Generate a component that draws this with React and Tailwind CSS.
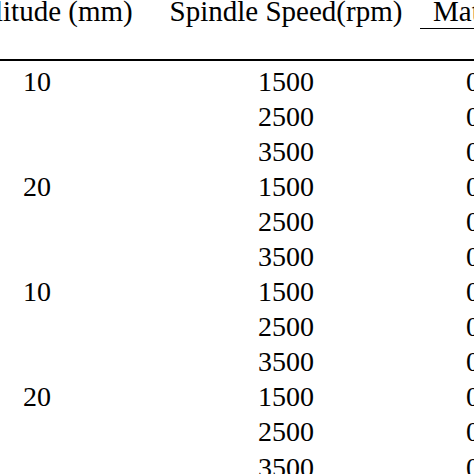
const rows = [
  { amp: "10", speed: "1500", rate: "0.152" },
  { amp: "", speed: "2500", rate: "0.184" },
  { amp: "", speed: "3500", rate: "0.207" },
  { amp: "20", speed: "1500", rate: "0.163" },
  { amp: "", speed: "2500", rate: "0.198" },
  { amp: "", speed: "3500", rate: "0.221" },
  { amp: "10", speed: "1500", rate: "0.147" },
  { amp: "", speed: "2500", rate: "0.176" },
  { amp: "", speed: "3500", rate: "0.195" },
  { amp: "20", speed: "1500", rate: "0.158" },
  { amp: "", speed: "2500", rate: "0.189" },
  { amp: "", speed: "3500", rate: "0.213" },
];

export default function App() {
  return (
    <div
      className="w-[474px] h-[474px] overflow-hidden bg-white text-black"
      style={{ fontFamily: '"Liberation Serif", "Times New Roman", serif' }}
    >
      <div className="-ml-[63px] w-[800px]">
        {/* header */}
        <div className="h-[62px]">
          <div className="flex -mt-[3px] text-[29px] leading-[28px] whitespace-nowrap">
            <div className="w-[200px] shrink-0 text-center pr-[7px]">Amplitude (mm)</div>
            <div className="w-[283px] shrink-0 text-center pl-[15px]">Spindle Speed(rpm)</div>
            <div className="flex-1 pl-[13px] pb-[3px] border-b-[1.5px] border-black">
              Material Removal Rate
            </div>
          </div>
        </div>
        <div className="h-[1.5px] bg-black" />

        {/* body */}
        <div className="pt-[3px] text-[28px] leading-[35.1px]">
          {rows.map((row, i) => (
            <div key={i} className="flex whitespace-nowrap">
              <div className="w-[200px] shrink-0 text-center">{row.amp}</div>
              <div className="w-[283px] shrink-0 text-center pl-[15px]">{row.speed}</div>
              <div className="flex-1 pl-[46px]">{row.rate}</div>
            </div>
          ))}
        </div>
      </div>
    </div>
  );
}
